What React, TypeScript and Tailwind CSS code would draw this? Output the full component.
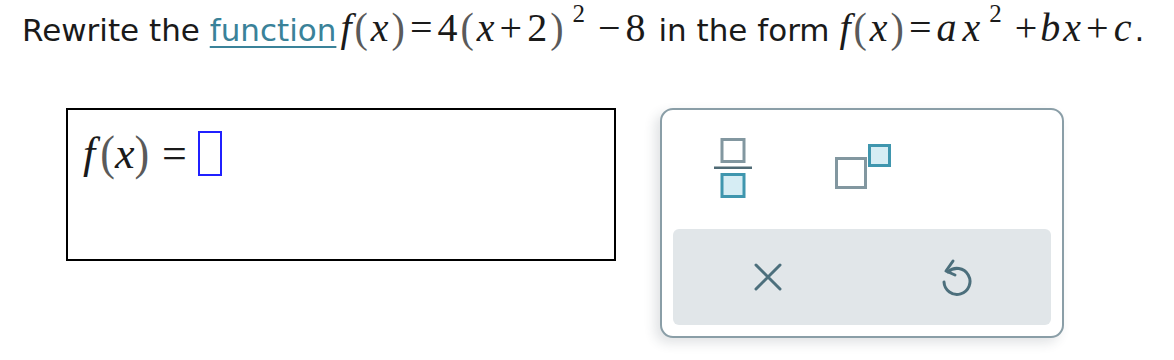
import React from 'react';

const Paren: React.FC<{ children: React.ReactNode }> = ({ children }) => (
  <span className="inline-block not-italic text-[#5a5a5a] scale-y-[1.08]">{children}</span>
);

const Sup: React.FC<{ children: React.ReactNode }> = ({ children }) => (
  <span className="not-italic text-[25px] relative top-[-19px] ml-[6px]">{children}</span>
);

const Op: React.FC<{ children: React.ReactNode }> = ({ children }) => (
  <span className="not-italic mx-[2px]">{children}</span>
);

const FractionIcon = () => (
  <svg width="38" height="60" viewBox="0 0 38 60">
    <rect x="8" y="1.5" width="22" height="22" fill="#fff" stroke="#8297a0" strokeWidth="3" />
    <rect x="0" y="28.5" width="38" height="2.5" fill="#4f6a75" />
    <rect x="8" y="36.5" width="22" height="22" fill="#d6edf4" stroke="#3f96ae" strokeWidth="3" />
  </svg>
);

const SuperscriptIcon = () => (
  <svg width="57" height="46" viewBox="0 0 57 46">
    <rect x="1.5" y="14.5" width="29" height="29" fill="#fff" stroke="#8297a0" strokeWidth="3" />
    <rect x="34.5" y="1.5" width="20" height="20" fill="#d6edf4" stroke="#3f96ae" strokeWidth="3" />
  </svg>
);

const ClearIcon = () => (
  <svg width="28" height="28" viewBox="0 0 28 28" fill="none" stroke="#4c6f7c" strokeWidth="3" strokeLinecap="round">
    <path d="M2 2L26 26M26 2L2 26" />
  </svg>
);

const UndoIcon = () => (
  <svg width="32" height="38" viewBox="0 0 32 38" fill="none" stroke="#4c6f7c" strokeWidth="3" strokeLinecap="round" strokeLinejoin="round">
    <path d="M3 24A13 13 0 1 0 7 14" />
    <path d="M12 3L5 13L14 17" />
  </svg>
);

export default function App() {
  return (
    <div className="w-[1174px] h-[360px] bg-white overflow-hidden font-['DejaVu_Sans',sans-serif] text-[#1a1a1a]">
      {/* Enunciado */}
      <p className="pl-[22px] pt-[8px] h-[49px] text-[31px] leading-[40px] whitespace-nowrap">
        Rewrite the{' '}
        <a href="#" className="text-[#3a8299] underline underline-offset-[5px] decoration-[1.5px]">function</a>
        <span className="font-['Liberation_Serif',serif] italic text-[40px] tracking-[3px] ml-[4px]">
          f<Paren>(</Paren>x<Paren>)</Paren>
          <Op>=</Op>
          <span className="not-italic">4</span>
          <Paren>(</Paren>x<Op>+</Op><span className="not-italic">2</span><Paren>)</Paren>
          <Sup>2</Sup>
          <span className="not-italic ml-[10px]">−</span>
          <span className="not-italic ml-[2px]">8</span>
        </span>
        {' '}in the form{' '}
        <span className="font-['Liberation_Serif',serif] italic text-[40px] tracking-[3px]">
          f<Paren>(</Paren>x<Paren>)</Paren>
          <Op>=</Op>a<span className="ml-[3px]">x</span><Sup>2</Sup>
          <span className="not-italic ml-[10px]">+</span>bx<Op>+</Op>c
        </span>
        .
      </p>

      <div className="flex items-start mt-[59px]">
        {/* Caixa de resposta */}
        <div className="ml-[66px] w-[550px] h-[153px] border-2 border-black">
          <div className="flex items-center pl-[15px] pt-[21px] font-['Liberation_Serif',serif] text-[44px] leading-[45px]">
            <span className="italic">f</span>
            <span className="italic ml-[5px]"><Paren>(</Paren>x<Paren>)</Paren></span>
            <span className="ml-[13px]">=</span>
            <span className="ml-[11px] w-[24px] h-[45px] border-2 border-[#2020ff]" />
          </div>
        </div>

        {/* Teclado */}
        <div className="ml-[44px] w-[404px] h-[230px] rounded-[13px] border-2 border-[#8a9ea7] bg-white p-[11px] shadow-[-5px_5px_12px_rgba(40,60,70,0.14)]">
          <div className="h-[108px] flex items-start pt-[17px] pl-[41px]">
            <button className="block"><FractionIcon /></button>
            <button className="block ml-[83px] mt-[6px]"><SuperscriptIcon /></button>
          </div>
          <div className="h-[96px] rounded-[6px] bg-[#e1e6e9] grid grid-cols-2">
            <button className="flex items-center justify-center"><ClearIcon /></button>
            <button className="flex items-center justify-center"><UndoIcon /></button>
          </div>
        </div>
      </div>
    </div>
  );
}
